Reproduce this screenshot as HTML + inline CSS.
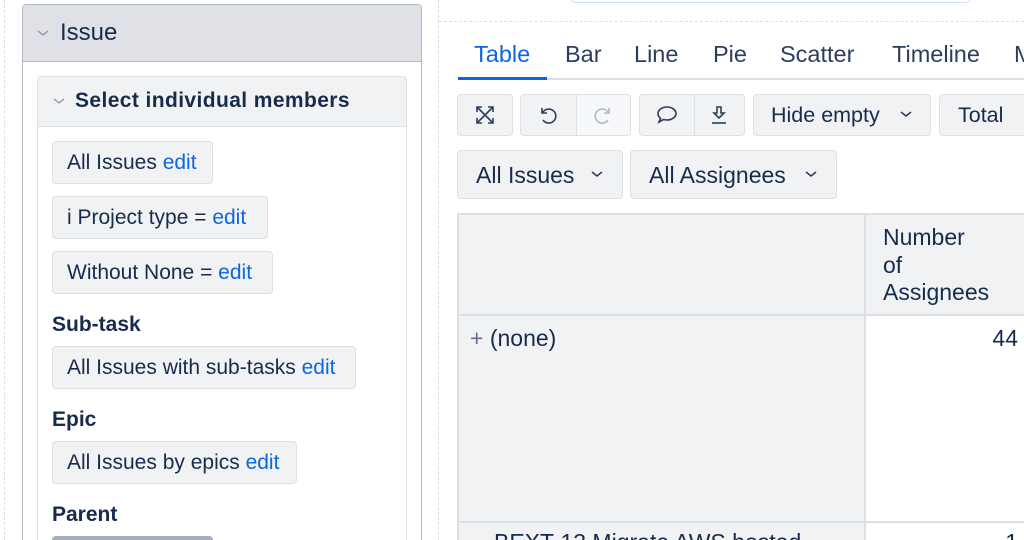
<!DOCTYPE html>
<html style="width:1024px;height:540px;overflow:hidden"><head><meta charset="utf-8"><style>
*{box-sizing:border-box;margin:0;padding:0}
body{width:1024px;height:540px;overflow:hidden;background:#fff;font-family:"Liberation Sans",sans-serif;color:#172b4d;position:relative}
.a{position:absolute}
.dv{position:absolute;border-left:1px dashed #dcdfe4}
.chip{position:absolute;left:52px;height:43px;background:#f1f2f4;border:1px solid #dcdfe4;border-radius:4px;font-size:21px;line-height:41px;padding-left:14px;white-space:nowrap}
.chip b{font-weight:normal;color:#0c66e4}
.lbl{position:absolute;left:52px;font-size:21px;font-weight:bold;color:#172b4d;line-height:24px}
.btn{position:absolute;background:#f1f2f4;border:1px solid #dcdfe4;border-radius:4px;font-size:21px;line-height:40px;white-space:nowrap}
.tab{position:absolute;top:41px;font-size:23.5px;color:#2c3e5d}
svg{position:absolute}
</style></head><body>
<div class="dv" style="left:4px;top:0;height:540px"></div>
<div class="dv" style="left:438px;top:0;height:540px"></div>
<div class="a" style="left:439px;top:21px;width:590px;border-top:1px dashed #dcdfe4"></div>
<div class="a" style="left:571px;top:-10px;width:399px;height:13px;border:1px solid #cfe1fd;border-radius:4px"></div>

<div class="a" style="left:22px;top:4px;width:400px;height:560px;border:1px solid #b3b9c4;border-radius:4px;overflow:hidden">
 <div style="height:57px;background:#dfe1e6;border-bottom:1px solid #b3b9c4"></div>
</div>
<svg style="left:36px;top:28px" width="14" height="10"><path d="M2 3l5 4 5-4" fill="none" stroke="#8590a2" stroke-width="1.2"/></svg>
<div class="a" style="left:60px;top:19px;font-size:24px">Issue</div>

<div class="a" style="left:37px;top:76px;width:370px;height:480px;border:1px solid #dcdfe4;border-radius:4px;overflow:hidden">
 <div style="height:50px;background:#f1f2f4;border-bottom:1px solid #dcdfe4"></div>
</div>
<svg style="left:52px;top:97px" width="14" height="10"><path d="M2 2l5 4 5-4" fill="none" stroke="#8590a2" stroke-width="1.2"/></svg>
<div class="a" style="left:75px;top:89px;font-size:21px;font-weight:bold;color:#172b4d;letter-spacing:0.4px">Select individual members</div>

<div class="chip" style="top:141px;width:161px">All Issues <b>edit</b></div>
<div class="chip" style="top:196px;width:216px">i Project type = <b>edit</b></div>
<div class="chip" style="top:251px;width:221px">Without None = <b>edit</b></div>
<div class="lbl" style="top:313px">Sub-task</div>
<div class="chip" style="top:346px;width:304px">All Issues with sub-tasks <b>edit</b></div>
<div class="lbl" style="top:408px">Epic</div>
<div class="chip" style="top:441px;width:245px">All Issues by epics <b>edit</b></div>
<div class="lbl" style="top:503px">Parent</div>
<div class="a" style="left:52px;top:536px;width:161px;height:20px;background:#a5adba;border-radius:4px"></div>

<div class="tab" style="left:474px;color:#0c66e4">Table</div>
<div class="tab" style="left:565px">Bar</div>
<div class="tab" style="left:634px">Line</div>
<div class="tab" style="left:713px">Pie</div>
<div class="tab" style="left:780px">Scatter</div>
<div class="tab" style="left:892px">Timeline</div>
<div class="tab" style="left:1014px">M</div>
<div class="a" style="left:458px;top:78px;width:570px;height:2px;background:#dcdfe4"></div>
<div class="a" style="left:458px;top:77px;width:89px;height:3px;background:#0c66e4"></div>

<div class="btn" style="left:457px;top:94px;width:56px;height:42px"></div>
<svg style="left:475px;top:105px" width="20" height="20" fill="none" stroke="#2c3e5d" stroke-width="1.6"><path d="M2 2l16 16M18 2L2 18M2 7V2h5M13 2h5v5M18 13v5h-5M7 18H2v-5"/></svg>
<div class="btn" style="left:520px;top:94px;width:111px;height:42px;overflow:hidden"><div style="position:absolute;left:55px;top:0;width:56px;height:42px;background:#f7f8f9;border-left:1px solid #dcdfe4"></div></div>
<svg style="left:537px;top:104px" width="22" height="22" fill="none" stroke="#2c3e5d" stroke-width="1.6"><path d="M5 4v5h5"/><path d="M5.5 9A7 7 0 1 1 6 16"/></svg>
<svg style="left:592px;top:104px" width="22" height="22" fill="none" stroke="#b3b9c4" stroke-width="1.6"><path d="M17 4v5h-5"/><path d="M16.5 9A7 7 0 1 0 16 16"/></svg>
<div class="btn" style="left:639px;top:94px;width:106px;height:42px;overflow:hidden"><div style="position:absolute;left:54px;top:0;height:42px;border-left:1px solid #dcdfe4"></div></div>
<svg style="left:655px;top:104px" width="24" height="22" fill="none" stroke="#2c3e5d" stroke-width="1.6"><path d="M12 3c5 0 9 3 9 6.5S17 16 12 16c-1.5 0-2.5-.2-3.5-.5L4 18l1.5-3.5C4 13 3 11.3 3 9.5 3 6 7 3 12 3z"/></svg>
<svg style="left:708px;top:104px" width="22" height="22" fill="none" stroke="#2c3e5d" stroke-width="1.6"><path d="M9 3h4v6h3l-5 5-5-5h3z"/><path d="M4 19h14"/></svg>
<div class="btn" style="left:753px;top:94px;width:178px;height:42px;padding-left:17px;font-size:21.5px">Hide empty</div>
<svg style="left:899px;top:110px" width="14" height="10"><path d="M2 2l5 4 5-4" fill="none" stroke="#2c3e5d" stroke-width="1.5"/></svg>
<div class="btn" style="left:939px;top:94px;width:100px;height:42px;padding-left:18px;font-size:21.5px">Total</div>

<div class="btn" style="left:457px;top:150px;width:166px;height:49px;line-height:49px;padding-left:18px;font-size:23px">All Issues</div>
<svg style="left:590px;top:170px" width="14" height="10"><path d="M2 2l5 4 5-4" fill="none" stroke="#2c3e5d" stroke-width="1.5"/></svg>
<div class="btn" style="left:630px;top:150px;width:207px;height:49px;line-height:49px;padding-left:18px;font-size:23px">All Assignees</div>
<svg style="left:804px;top:170px" width="14" height="10"><path d="M2 2l5 4 5-4" fill="none" stroke="#2c3e5d" stroke-width="1.5"/></svg>

<div class="a" style="left:457px;top:213px;width:580px;height:340px;border:2px solid #dcdfe4;background:#fff"></div>
<div class="a" style="left:459px;top:215px;width:406px;height:330px;background:#f1f2f4"></div>
<div class="a" style="left:865px;top:215px;width:170px;height:100px;background:#f1f2f4"></div>
<div class="a" style="left:864px;top:215px;width:2px;height:330px;background:#dcdfe4"></div>
<div class="a" style="left:459px;top:314px;width:580px;height:2px;background:#dcdfe4"></div>
<div class="a" style="left:459px;top:521px;width:580px;height:2px;background:#dcdfe4"></div>
<div class="a" style="left:883px;top:224px;font-size:23px;line-height:27.5px">Number<br>of<br>Assignees</div>
<div class="a" style="left:470px;top:325px;font-size:23px"><span style="color:#626f86;font-weight:300">+</span> (none)</div>
<div class="a" style="left:950px;top:325px;width:68px;text-align:right;font-size:23px">44</div>
<div class="a" style="left:494px;top:529px;font-size:23px">BEXT-13 Migrate AWS hosted</div>
<div class="a" style="left:950px;top:529px;width:68px;text-align:right;font-size:23px">1</div>
</body></html>
